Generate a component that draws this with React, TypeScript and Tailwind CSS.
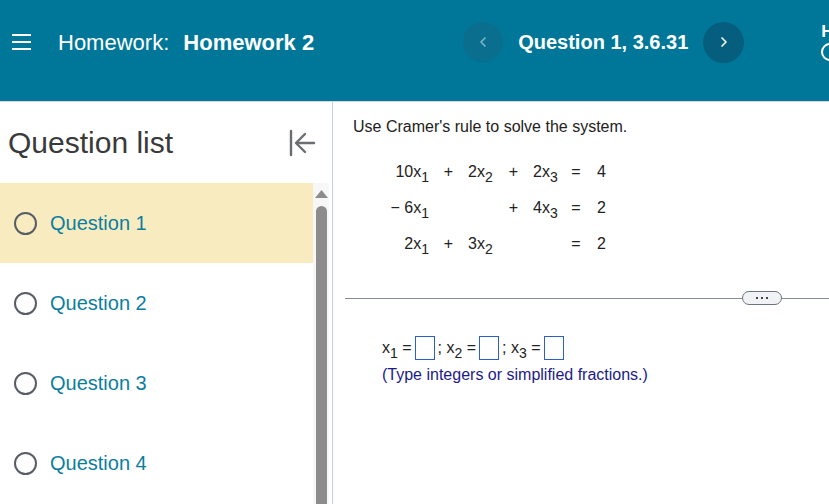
import { ChevronLeft, ChevronRight } from 'lucide-react'

const questions = ['Question 1', 'Question 2', 'Question 3', 'Question 4']

function Sub({ n }: { n: string }) {
  return <span className="relative top-[5px] text-[14px] leading-none">{n}</span>
}

function Term({ c, i }: { c: string; i: string }) {
  return (
    <span>
      {c}x<Sub n={i} />
    </span>
  )
}

function AnswerBox() {
  return <span className="inline-block shrink-0 w-[20px] h-[24px] border-[1.5px] border-[#2d5fcc] bg-white align-middle mx-[3px]" />
}

export default function App() {
  return (
    <div className="w-[829px] h-[504px] overflow-hidden flex flex-col bg-white font-['Liberation_Sans',Arial,sans-serif]">
      {/* header */}
      <div className="h-[102px] shrink-0 bg-[#007799] border-b border-[#d3d8de] pt-[21px] overflow-hidden">
        <div className="flex items-center h-[42px] w-max">
          <div className="shrink-0 ml-[12px] w-[19px] flex flex-col gap-[5px]">
            <span className="h-[2px] bg-white" />
            <span className="h-[2px] bg-white" />
            <span className="h-[2px] bg-white" />
          </div>
          <div className="shrink-0 ml-[27px] text-white text-[22px] whitespace-nowrap">
            Homework: <span className="ml-[8px] font-bold">Homework 2</span>
          </div>
          <div className="shrink-0 ml-[149px] w-[40px] h-[40px] rounded-full bg-[#0a6e8e] flex items-center justify-center">
            <ChevronLeft size={16} strokeWidth={2.5} className="text-[#7fb4c7]" />
          </div>
          <div className="shrink-0 ml-[15px] text-white text-[20px] font-bold whitespace-nowrap">Question 1, 3.6.31</div>
          <div className="shrink-0 ml-[15px] w-[41px] h-[41px] rounded-full bg-[#055e7d] flex items-center justify-center">
            <ChevronRight size={16} strokeWidth={2.5} className="text-white" />
          </div>
          <div className="shrink-0 ml-[77px] flex flex-col text-white leading-none whitespace-nowrap">
            <span className="text-[17px] font-bold">HW Score</span>
            <span className="mt-[3px] w-[18px] h-[18px] rounded-full border-2 border-white" />
          </div>
        </div>
      </div>

      <div className="flex flex-1 min-h-0">
        {/* sidebar */}
        <div className="w-[333px] shrink-0 border-r border-[#c6cee0] flex flex-col">
          <div className="h-[81px] shrink-0 flex items-center justify-between pl-[8px] pr-[16px]">
            <span className="text-[30px] text-[#3a3a3a]">Question list</span>
            <svg width="28" height="28" viewBox="0 0 28 28" fill="none" stroke="#6b6e70" strokeWidth="2.4" strokeLinecap="round" strokeLinejoin="round">
              <path d="M3 2v24" />
              <path d="M26 14H9" />
              <path d="M17 5l-9 9 9 9" />
            </svg>
          </div>
          <div className="flex flex-1 min-h-0">
            <div className="w-[313px] flex flex-col">
              {questions.map((q, i) => (
                <div key={q} className={`h-[80px] shrink-0 flex items-center pl-[14px] gap-[13px] ${i === 0 ? 'bg-[#f8ebc0]' : ''}`}>
                  <span className="w-[23px] h-[23px] rounded-full border-[2.5px] border-[#575d66]" />
                  <span className="text-[20px] text-[#0b7ea0]">{q}</span>
                </div>
              ))}
            </div>
            <div className="w-[16px] bg-[#f7f7f7] flex flex-col items-center pt-[7px]">
              <svg width="13" height="8" viewBox="0 0 13 8">
                <path d="M6.5 0L13 8H0z" fill="#8c8c8c" />
              </svg>
              <div className="mt-[8px] w-[11px] flex-1 bg-[#8c8c8c] rounded-t-full" />
            </div>
          </div>
        </div>

        {/* question content */}
        <div className="flex-1 flex flex-col pt-[16px] text-[#222]">
          <p className="pl-[20px] text-[16px] leading-[18px]">Use Cramer's rule to solve the system.</p>

          <div className="mt-[18px] ml-[57px] grid grid-cols-[41px_35px_31px_33px_32px_28px_20px] auto-rows-[36px] items-center text-[16px] leading-[18px]">
            <span className="text-right pr-[2px]"><Term c="10" i="1" /></span>
            <span className="text-center">+</span>
            <span className="pl-[2px]"><Term c="2" i="2" /></span>
            <span className="text-center">+</span>
            <span className="pl-[3px]"><Term c="2" i="3" /></span>
            <span className="text-center">=</span>
            <span className="pl-[7px]">4</span>

            <span className="text-right pr-[2px]">− <Term c="6" i="1" /></span>
            <span />
            <span />
            <span className="text-center">+</span>
            <span className="pl-[3px]"><Term c="4" i="3" /></span>
            <span className="text-center">=</span>
            <span className="pl-[7px]">2</span>

            <span className="text-right pr-[2px]"><Term c="2" i="1" /></span>
            <span className="text-center">+</span>
            <span className="pl-[2px]"><Term c="3" i="2" /></span>
            <span />
            <span />
            <span className="text-center">=</span>
            <span className="pl-[7px]">2</span>
          </div>

          <div className="mt-[29px] ml-[12px] flex items-center">
            <div className="flex-1 h-px bg-[#878c96]" />
            <div className="w-[40px] h-[14px] rounded-full border border-[#6c7480] bg-[#f0f2f5] flex items-center justify-center gap-[3px]">
              <span className="w-[2px] h-[2px] bg-[#444]" />
              <span className="w-[2px] h-[2px] bg-[#444]" />
              <span className="w-[2px] h-[2px] bg-[#444]" />
            </div>
            <div className="w-[47px] h-px bg-[#878c96]" />
          </div>

          <div className="mt-[31px] pl-[49px] text-[16px] leading-[24px] flex items-center whitespace-nowrap">
            <span>x<Sub n="1" /> =</span>
            <AnswerBox />
            <span>; x<Sub n="2" /> =</span>
            <AnswerBox />
            <span>; x<Sub n="3" /> =</span>
            <AnswerBox />
          </div>
          <p className="pl-[49px] mt-[6px] text-[16px] leading-[18px] text-[#1c1a8a]">(Type integers or simplified fractions.)</p>
        </div>
      </div>
    </div>
  )
}
